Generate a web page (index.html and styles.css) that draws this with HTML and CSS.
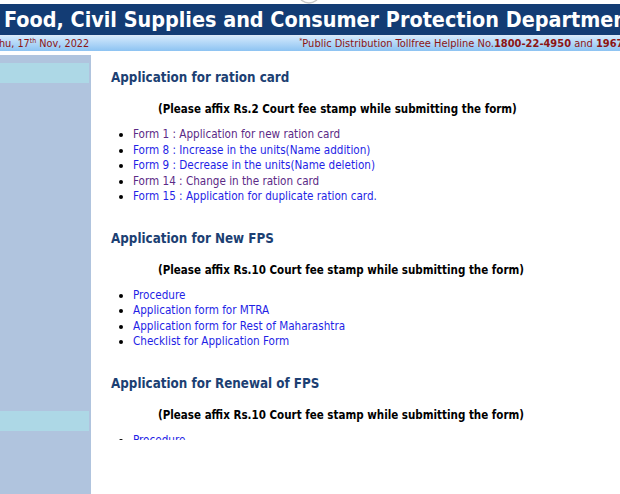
FILE: index.html
```html
<!DOCTYPE html>
<html>
<head>
<meta charset="utf-8">
<title>Food, Civil Supplies and Consumer Protection Department</title>
<link rel="stylesheet" href="styles.css">
</head>
<body>
<div class="page">
  <div class="topstrip">
    <svg class="logo-tip" width="18" height="4" viewBox="0 0 18 4"><path d="M1 0 Q9 6 17 0" fill="none" stroke="#c8c8c8" stroke-width="1.5"/></svg>
  </div>
  <div class="titlebar">Food, Civil Supplies and Consumer Protection Department</div>
  <div class="divider"></div>
  <div class="infobar">
    <span class="date">Thu, 17<sup>th</sup> Nov, 2022</span>
    <span class="helpline"><sup>*</sup>Public Distribution Tollfree Helpline No.<b>1800-22-4950</b> and <b>1967</b> / <b>1800-22-5977</b></span>
  </div>
  <div class="gap"></div>
  <div class="layout">
    <aside class="sidebar">
      <div class="sidebar-bar"></div>
      <div class="sidebar-spacer"></div>
      <div class="sidebar-bar"></div>
    </aside>
    <main class="content">
      <section class="section">
        <h2 class="heading">Application for ration card</h2>
        <p class="note">(Please affix Rs.2 Court fee stamp while submitting the form)</p>
        <ul class="links">
          <li><a class="visited" href="#">Form 1 : Application for new ration card</a></li>
          <li><a href="#">Form 8 : Increase in the units(Name addition)</a></li>
          <li><a href="#">Form 9 : Decrease in the units(Name deletion)</a></li>
          <li><a class="visited" href="#">Form 14 : Change in the ration card</a></li>
          <li><a href="#">Form 15 : Application for duplicate ration card.</a></li>
        </ul>
      </section>
      <section class="section">
        <h2 class="heading">Application for New FPS</h2>
        <p class="note">(Please affix Rs.10 Court fee stamp while submitting the form)</p>
        <ul class="links">
          <li><a href="#">Procedure</a></li>
          <li><a href="#">Application form for MTRA</a></li>
          <li><a href="#">Application form for Rest of Maharashtra</a></li>
          <li><a href="#">Checklist for Application Form</a></li>
        </ul>
      </section>
      <section class="section">
        <h2 class="heading">Application for Renewal of FPS</h2>
        <p class="note">(Please affix Rs.10 Court fee stamp while submitting the form)</p>
        <ul class="links">
          <li><a href="#">Procedure</a></li>
          <li><a href="#">Application form</a></li>
        </ul>
      </section>
    </main>
  </div>
</div>
</body>
</html>
```
FILE: styles.css
```css
html, body {
  margin: 0;
  padding: 0;
  width: 620px;
  height: 494px;
  overflow: hidden;
  background: #ffffff;
}
.page {
  font-family: "DejaVu Sans Condensed", "DejaVu Sans", Verdana, sans-serif;
  font-stretch: condensed;
  width: 620px;
  height: 494px;
  display: flex;
  flex-direction: column;
  overflow: hidden;
}
.topstrip {
  height: 4px;
  padding-left: 300px;
  line-height: 0;
}
.logo-tip { display: block; }
.titlebar {
  height: 31px;
  line-height: 31px;
  background: #133c74;
  color: #ffffff;
  font-weight: bold;
  font-size: 21.4px;
  padding-left: 4px;
  white-space: nowrap;
  overflow: hidden;
}
.divider {
  height: 1px;
  background: #dce8f6;
}
.infobar {
  height: 15px;
  background: linear-gradient(#d3e9fc, #8dc3f2);
  display: flex;
  align-items: center;
  white-space: nowrap;
  font-size: 10.8px;
  color: #8b1414;
  overflow: hidden;
}
.infobar sup {
  font-size: 7px;
  vertical-align: 4px;
  line-height: 0;
}
.date {
  margin-left: -7px;
  flex: none;
}
.helpline {
  margin-left: 210px;
  flex: none;
  font-size: 11px;
}
.helpline b { font-weight: bold; }
.gap { height: 4px; }
.layout {
  flex: 1;
  display: flex;
  min-height: 0;
}
.sidebar {
  width: 91px;
  flex: none;
  background: #b0c4de;
  display: flex;
  flex-direction: column;
  padding-top: 8px;
  box-sizing: border-box;
}
.sidebar-bar {
  width: 89px;
  height: 20px;
  background: #add8e6;
}
.sidebar-spacer { height: 328px; }
.content {
  flex: 1;
  height: 385px;
  overflow: hidden;
  padding: 14px 0 0 20px;
  box-sizing: border-box;
  white-space: nowrap;
}
.section { margin-bottom: 25px; }
.heading {
  margin: 0;
  font-size: 13.3px;
  line-height: 18px;
  font-weight: bold;
  color: #1c3f73;
}
.note {
  margin: 15px 0 0 47px;
  font-size: 11.5px;
  line-height: 15px;
  font-weight: bold;
  color: #000000;
}
.links {
  margin: 10px 0 0 0;
  padding-left: 22px;
  font-size: 11.6px;
  line-height: 15.5px;
}
.links li { color: #000000; }
.links a {
  color: #1f1fe6;
  text-decoration: none;
}
.links a.visited { color: #5b2a86; }
```
